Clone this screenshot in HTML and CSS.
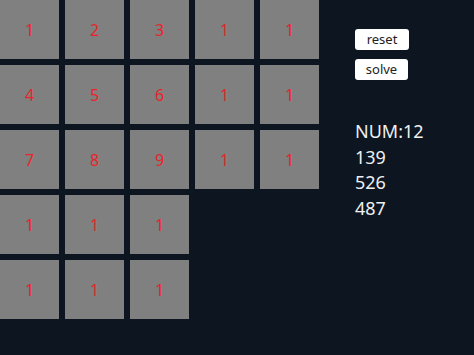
FILE: index.html
```html
<!DOCTYPE html>
<html>
<head>
<meta charset="utf-8">
<link rel="stylesheet" href="styles.css">
</head>
<body>
<div class="page">
  <div class="board">
    <div class="row"><div class="tile">1</div><div class="tile">2</div><div class="tile">3</div><div class="tile">1</div><div class="tile">1</div></div>
    <div class="row"><div class="tile">4</div><div class="tile">5</div><div class="tile">6</div><div class="tile">1</div><div class="tile">1</div></div>
    <div class="row"><div class="tile">7</div><div class="tile">8</div><div class="tile">9</div><div class="tile">1</div><div class="tile">1</div></div>
    <div class="row"><div class="tile">1</div><div class="tile">1</div><div class="tile">1</div></div>
    <div class="row"><div class="tile">1</div><div class="tile">1</div><div class="tile">1</div></div>
  </div>
  <div class="panel">
    <button class="btn btn-reset">reset</button>
    <button class="btn btn-solve">solve</button>
    <div class="info">
      <div>NUM:12</div>
      <div>139</div>
      <div>526</div>
      <div>487</div>
    </div>
  </div>
</div>
</body>
</html>
```

FILE: styles.css
```css
html, body {
  margin: 0;
  padding: 0;
  background: #0c1520;
  width: 474px;
  height: 355px;
  overflow: hidden;
  font-family: "Noto Sans", "DejaVu Sans", sans-serif;
}
.page {
  display: flex;
  gap: 36px;
}
.board {
  display: flex;
  flex-direction: column;
  gap: 6px;
}
.row {
  display: flex;
  gap: 6px;
}
.tile {
  width: 59px;
  height: 59px;
  background: #808080;
  color: #e8242a;
  font-size: 16px;
  display: flex;
  align-items: center;
  justify-content: center;
}
.panel {
  display: flex;
  flex-direction: column;
  align-items: flex-start;
  padding-top: 29px;
}
.btn {
  font-family: "Noto Sans", "DejaVu Sans", sans-serif;
  font-size: 13px;
  color: #222;
  background: #fff;
  border: none;
  border-radius: 3px;
  height: 21px;
  padding: 0;
  line-height: 21px;
}
.btn-reset {
  width: 54px;
}
.btn-solve {
  width: 53px;
  margin-top: 9px;
}
.info {
  margin-top: 39px;
  color: #eef0f2;
  font-size: 18px;
  line-height: 25.7px;
}
```
